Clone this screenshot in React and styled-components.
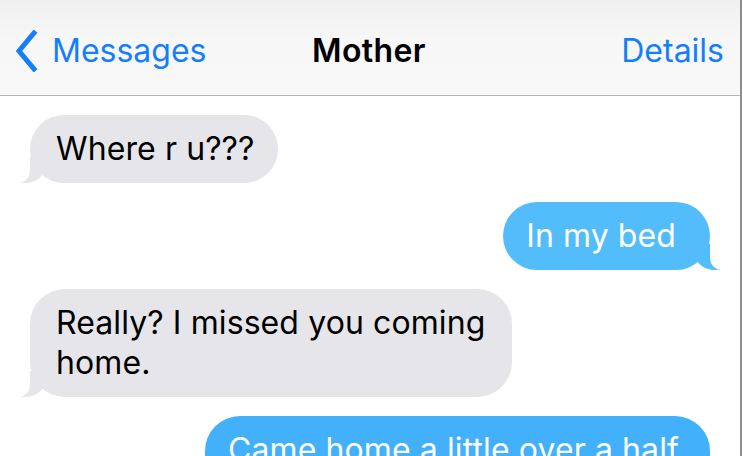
import React from "react";
import styled, { createGlobalStyle } from "styled-components";

const Global = createGlobalStyle`
  html, body { margin: 0; padding: 0; background: #ffffff; }
  body { font-family: Inter, "Liberation Sans", Arial, sans-serif; }
`;

const Screen = styled.div`
  width: 740px;
  height: 456px;
  overflow: hidden;
  border-right: 2px solid #8c8c8c;
  background: #ffffff;
  display: flex;
  flex-direction: column;
`;

const NavBar = styled.header`
  height: 96px;
  flex: none;
  box-sizing: border-box;
  border-bottom: 1px solid #b4b4b4;
  background: linear-gradient(#efefef, #f7f7f7 40%, #f8f8f8);
  display: grid;
  grid-template-columns: 1fr auto 1fr;
  align-items: center;
  padding: 6px 16px 0 14px;
`;

const BackButton = styled.div`
  display: flex;
  align-items: center;
  gap: 14px;
  color: #147efb;
  font-size: 32px;
`;

const Title = styled.div`
  font-size: 32px;
  font-weight: 600;
  color: #000;
  letter-spacing: 0.4px;
`;

const Action = styled.div`
  justify-self: end;
  color: #147efb;
  font-size: 32px;
`;

const Thread = styled.main`
  display: flex;
  flex-direction: column;
  gap: 19px;
  padding: 19px 30px 0 30px;
`;

const Bubble = styled.div`
  position: relative;
  box-sizing: border-box;
  max-width: ${(p) => p.$max || 482}px;
  padding: 14px ${(p) => p.$padR ?? (p.$mine ? 34 : 23)}px 14px ${(p) => (p.$mine ? 23 : 26)}px;
  border-radius: 35px;
  font-size: 32px;
  line-height: 40px;
  letter-spacing: 0.1px;
  align-self: ${(p) => (p.$mine ? "flex-end" : "flex-start")};
  background: ${(p) => (p.$mine ? p.$tone || "#52bdfa" : "#e5e5ea")};
  color: ${(p) => (p.$mine ? "#ffffff" : "#000000")};

  &::before {
    content: "";
    position: absolute;
    bottom: 0;
    height: 26px;
    width: 26px;
    background: inherit;
    ${(p) =>
      p.$mine
        ? "right: -11px; border-bottom-left-radius: 20px 16px;"
        : "left: -11px; border-bottom-right-radius: 20px 16px;"}
  }
  &::after {
    content: "";
    position: absolute;
    bottom: 0;
    height: 28px;
    width: 13px;
    background: #ffffff;
    ${(p) =>
      p.$mine
        ? "right: -13px; border-bottom-left-radius: 12px;"
        : "left: -13px; border-bottom-right-radius: 12px;"}
  }
`;

function Chevron() {
  return (
    <svg width="24" height="42" viewBox="0 0 24 42" aria-hidden="true">
      <path d="M20 3 L5 21 L20 39" fill="none" stroke="#147efb" strokeWidth="5" strokeLinecap="square" strokeLinejoin="miter" />
    </svg>
  );
}

export default function App() {
  return (
    <>
      <Global />
      <Screen>
        <NavBar>
          <BackButton>
            <Chevron />
            <span>Messages</span>
          </BackButton>
          <Title>Mother</Title>
          <Action>Details</Action>
        </NavBar>
        <Thread>
          <Bubble>Where r u???</Bubble>
          <Bubble $mine $tone="#52bdfa">In my bed</Bubble>
          <Bubble $max={482}>Really? I missed you coming home.</Bubble>
          <Bubble $mine $tone="#42b0fa" $max={505} $padR={24}>
            Came home a little over a half hour ago.
          </Bubble>
        </Thread>
      </Screen>
    </>
  );
}
